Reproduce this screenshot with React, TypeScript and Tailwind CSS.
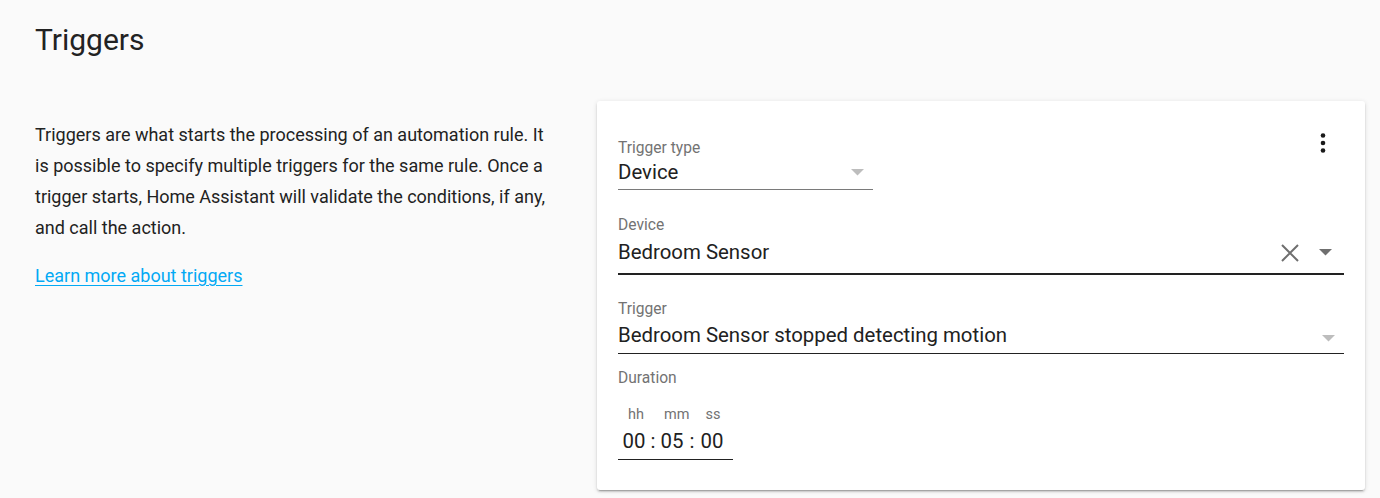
import React from "react";

function Arrow({ color }: { color: string }) {
  return (
    <svg width="13" height="7" viewBox="0 0 13 7" className="shrink-0">
      <polygon points="0,0 13,0 6.5,6.5" fill={color} />
    </svg>
  );
}

export default function App() {
  return (
    <div
      className="w-[1380px] h-[498px] bg-[#fafafa] overflow-hidden text-[#212121]"
      style={{ fontFamily: "Roboto, 'Noto Sans', sans-serif" }}
    >
      <div className="pt-[20px] pl-[35px] text-[30px] leading-[40px] text-[#222]">Triggers</div>
      <div className="mt-[41px] flex pl-[35px]">
        <div className="w-[520px] pt-[18px] text-[18px] leading-[31px] text-[#222]">
          <p>
            Triggers are what starts the processing of an automation rule. It is possible to specify
            multiple triggers for the same rule. Once a trigger starts, Home Assistant will validate the
            conditions, if any, and call the action.
          </p>
          <p className="mt-[17px]">
            <a href="#" className="text-[#03a9f4] underline underline-offset-[3px]">
              Learn more about triggers
            </a>
          </p>
        </div>
        <div className="relative ml-[42px] w-[768px] h-[389px] bg-white rounded-[3px] shadow-[0_2px_2px_0_rgba(0,0,0,0.14),0_1px_5px_0_rgba(0,0,0,0.12),0_3px_1px_-2px_rgba(0,0,0,0.2)] px-[21px] pt-[37px]">
          <div className="absolute top-[30px] right-[30px] w-[24px] h-[24px]">
            <svg width="24" height="24" viewBox="0 0 24 24">
              <circle cx="12" cy="4.5" r="2.3" fill="#1a1a1a" />
              <circle cx="12" cy="12" r="2.3" fill="#1a1a1a" />
              <circle cx="12" cy="19.5" r="2.3" fill="#1a1a1a" />
            </svg>
          </div>

          {/* Trigger type */}
          <div className="w-[255px]">
            <div className="text-[15.6px] leading-[20px] text-[#737373]">Trigger type</div>
            <div className="flex items-center justify-between h-[28px] border-b border-[#7a7a7a] box-content pb-[3px] pr-[9px]">
              <span className="text-[20.4px] leading-[28px]">Device</span>
              <Arrow color="#bdbdbd" />
            </div>
          </div>

          {/* Device */}
          <div className="mt-[25px]">
            <div className="text-[15.6px] leading-[20px] text-[#737373]">Device</div>
            <div className="mt-[1px] flex items-center h-[32px] box-content pb-[5px] border-b-2 border-[#222]">
              <span className="flex-1 text-[20.4px] leading-[32px]">Bedroom Sensor</span>
              <svg width="18" height="18" viewBox="0 0 18 18" className="shrink-0 mr-[20px] mt-[1px]">
                <path d="M1 1 L17 17 M17 1 L1 17" stroke="#6f6f6f" strokeWidth="2" fill="none" />
              </svg>
              <div className="mr-[12px] mt-[1px]">
                <Arrow color="#6f6f6f" />
              </div>
            </div>
          </div>

          {/* Trigger */}
          <div className="mt-[24px]">
            <div className="text-[15.6px] leading-[20px] text-[#737373]">Trigger</div>
            <div className="mt-[2px] flex items-center h-[28px] box-content pb-[4px] border-b border-[#222]">
              <span className="flex-1 text-[20.4px] leading-[28px]">Bedroom Sensor stopped detecting motion</span>
              <div className="mr-[9px] mt-[6px]">
                <Arrow color="#bdbdbd" />
              </div>
            </div>
          </div>

          {/* Duration */}
          <div className="mt-[14px]">
            <div className="text-[15.6px] leading-[20px] text-[#737373]">Duration</div>
            <div className="mt-[18px] w-[115px]">
              <div className="flex pl-[4px] text-[14.5px] leading-[18px] text-[#737373]">
                <span className="w-[24px] text-center pl-[4px]">hh</span>
                <span className="w-[14px]" />
                <span className="w-[24px] text-center pl-[4px]">mm</span>
                <span className="w-[16px]" />
                <span className="w-[24px] text-center pl-[2px]">ss</span>
              </div>
              <div className="mt-[3px] flex pl-[4px] h-[28px] box-content pb-[4px] border-b border-[#222] text-[20.4px] leading-[28px]">
                <span className="w-[24px] text-center">00</span>
                <span className="w-[14px] text-center">:</span>
                <span className="w-[24px] text-center">05</span>
                <span className="w-[16px] text-center">:</span>
                <span className="w-[24px] text-center">00</span>
              </div>
            </div>
          </div>
        </div>
      </div>
    </div>
  );
}
